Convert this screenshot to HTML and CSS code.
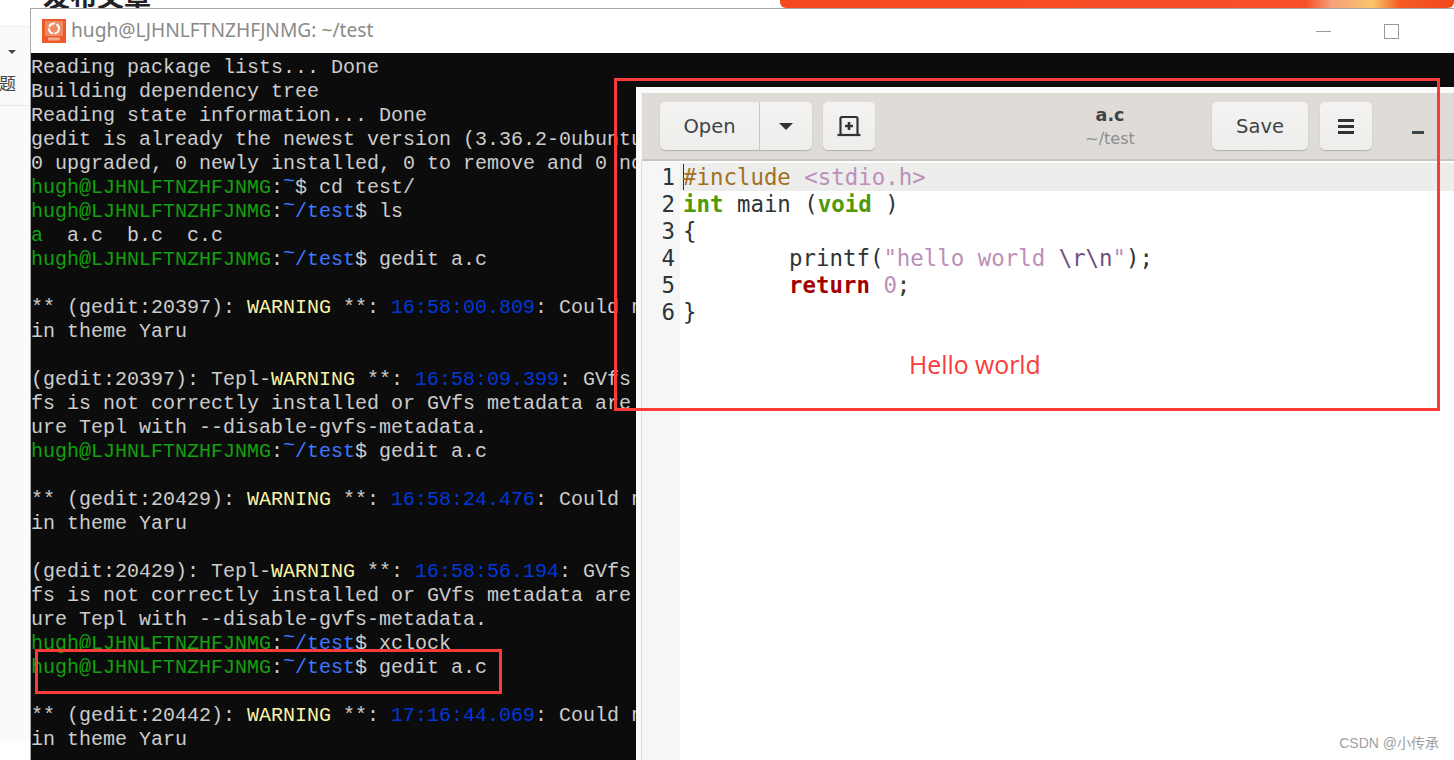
FILE: index.html
```html
<!DOCTYPE html>
<html>
<head>
    <meta charset="UTF-8">
    <title>gedit a.c</title>
    <link rel="stylesheet" href="styles.css">
</head>
<body>
    <!-- page behind the windows -->
    <div class="page-top">
        <div class="page-title">发布文章</div>
        <div class="banner"></div>
    </div>
    <div class="page-side">
        <div class="side-caret"></div>
        <div class="side-text">题</div>
    </div>

    <!-- terminal window -->
    <div class="terminal">
        <div class="titlebar">
            <svg class="app-icon" width="24" height="24" viewBox="0 0 24 24">
                <rect width="24" height="24" fill="#ee5b2b"/>
                <rect x="3" y="2" width="18" height="15" fill="#f08a63"/>
                <circle cx="12" cy="9.500" r="5" fill="none" stroke="#fff" stroke-width="2" stroke-dasharray="7 1.500"/>
                <rect x="6" y="18.500" width="12" height="3" fill="#f6a98c"/>
            </svg>
            <span class="title-text">hugh@LJHNLFTNZHFJNMG: ~/test</span>
            <div class="win-min"></div>
            <div class="win-max"></div>
        </div>
<pre class="console">Reading package lists... Done
Building dependency tree
Reading state information... Done
gedit is already the newest version (3.36.2-0ubuntu1).
0 upgraded, 0 newly installed, 0 to remove and 0 not upgraded.
<span class="g">hugh@LJHNLFTNZHFJNMG</span>:<span class="b tilde">~</span>$ cd test/
<span class="g">hugh@LJHNLFTNZHFJNMG</span>:<span class="b tilde">~</span><span class="b">/test</span>$ ls
<span class="g">a</span>  a.c  b.c  c.c
<span class="g">hugh@LJHNLFTNZHFJNMG</span>:<span class="b tilde">~</span><span class="b">/test</span>$ gedit a.c

** (gedit:20397): <span class="y">WARNING</span> **: <span class="t">16:58:00.809</span>: Could not
in theme Yaru

(gedit:20397): Tepl-<span class="y">WARNING</span> **: <span class="t">16:58:09.399</span>: GVfs
fs is not correctly installed or GVfs metadata are
ure Tepl with --disable-gvfs-metadata.
<span class="g">hugh@LJHNLFTNZHFJNMG</span>:<span class="b tilde">~</span><span class="b">/test</span>$ gedit a.c

** (gedit:20429): <span class="y">WARNING</span> **: <span class="t">16:58:24.476</span>: Could not
in theme Yaru

(gedit:20429): Tepl-<span class="y">WARNING</span> **: <span class="t">16:58:56.194</span>: GVfs
fs is not correctly installed or GVfs metadata are
ure Tepl with --disable-gvfs-metadata.
<span class="g">hugh@LJHNLFTNZHFJNMG</span>:<span class="b tilde">~</span><span class="b">/test</span>$ xclock
<span class="g">hugh@LJHNLFTNZHFJNMG</span>:<span class="b tilde">~</span><span class="b">/test</span>$ gedit a.c

** (gedit:20442): <span class="y">WARNING</span> **: <span class="t">17:16:44.069</span>: Could not
in theme Yaru</pre>
    </div>

    <!-- gedit window -->
    <div class="gedit">
        <div class="headerbar">
            <div class="btn-group">
                <div class="btn btn-open">Open</div>
                <div class="btn btn-arrow"><div class="arrow"></div></div>
            </div>
            <div class="btn btn-icon">
                <svg width="24" height="24" viewBox="0 0 24 24" fill="none" stroke="#2e3436" stroke-width="2.200">
                    <path d="M3.500 20V4.500Q3.500 3 5 3H19Q20.500 3 20.500 4.500V20"/>
                    <path d="M0.500 21H23.500"/>
                    <path d="M12 8V16M8 12H16" stroke-width="2.600"/>
                </svg>
            </div>
            <div class="doc-title">
                <div class="doc-name">a.c</div>
                <div class="doc-path">~/test</div>
            </div>
            <div class="btn btn-save">Save</div>
            <div class="btn btn-icon">
                <div class="burger"><i></i><i></i><i></i></div>
            </div>
            <div class="min-dash"></div>
        </div>
        <div class="editor">
            <div class="gutter">
                <div>1</div><div>2</div><div>3</div><div>4</div><div>5</div><div>6</div>
            </div>
            <div class="code">
<pre class="current"><span class="caret"></span><span class="pp">#include</span> <span class="str">&lt;stdio.h&gt;</span></pre>
<pre><span class="kw-type">int</span> main (<span class="kw-type">void</span> )</pre>
<pre>{</pre>
<pre><span class="indent"></span>printf(<span class="str">"hello world </span><span class="esc">\r\n</span><span class="str">"</span>);</pre>
<pre><span class="indent"></span><span class="kw-ret">return</span> <span class="str">0</span>;</pre>
<pre>}</pre>
            </div>
        </div>
    </div>

    <!-- annotations on top of the screenshot -->
    <div class="mark mark-gedit"></div>
    <div class="mark mark-cmd"></div>
    <div class="note">Hello world</div>
    <div class="watermark">CSDN @小传承</div>
</body>
</html>
```

FILE: styles.css
```css
html, body {
    margin: 0;
    padding: 0;
}
body {
    position: relative;
    width: 1454px;
    height: 760px;
    overflow: hidden;
    background-color: #fff;
    font-family: "Noto Sans", "Noto Sans CJK SC", sans-serif;
}
pre {
    margin: 0;
    font: inherit;
}

/* page behind */
.page-top {
    display: flex;
    height: 26px;
    overflow: hidden;
    background-color: #fff;
}
.page-title {
    margin: -24px 0 0 43px;
    font-family: "Noto Sans CJK SC", sans-serif;
    font-size: 27px;
    font-weight: 700;
    line-height: 40px;
    color: #222;
}
.banner {
    width: 674px;
    height: 8px;
    margin-left: auto;
    background: linear-gradient(90deg, #f6481f, #f8502a 78%, #f6a27a 82%, #f9c46a 88%, #f55a24 92%, #f0481c);
    border-radius: 0 0 6px 6px;
}
.page-side {
    width: 30px;
    height: 714px;
    background-color: #fafafa;
    border-top: 1px solid #eee;
}
.side-caret {
    width: 0;
    height: 0;
    margin: 23px 0 0 8px;
    border-left: 4px solid transparent;
    border-right: 4px solid transparent;
    border-top: 4px solid #444;
}
.side-text {
    width: 30px;
    height: 34px;
    margin-top: 18px;
    box-sizing: border-box;
    font-size: 17px;
    line-height: 24px;
    color: #444;
    text-indent: -1px;
    border-bottom: 1px solid #e8e8e8;
}

/* terminal */
.terminal {
    position: absolute;
    left: 30px;
    top: 8px;
    width: 1424px;
    height: 752px;
    overflow: hidden;
    box-sizing: border-box;
    border: 1px solid #a8a8a8;
    border-right: none;
    border-bottom: none;
    background-color: #0c0c0c;
}
.titlebar {
    display: flex;
    align-items: center;
    height: 44px;
    padding-left: 11px;
    background-color: #fff;
}
.title-text {
    margin-left: 5px;
    font-family: "Noto Sans", sans-serif;
    font-size: 19.200px;
    line-height: 42px;
    align-self: flex-start;
    color: #8a8a8a;
}
.win-min {
    width: 15px;
    height: 1px;
    margin-left: auto;
    background-color: #999;
}
.win-max {
    width: 13px;
    height: 13px;
    margin: 0 55px 0 53px;
    border: 1px solid #999;
}
.console {
    padding-top: 3px;
    font-family: "Liberation Mono", monospace;
    font-size: 20px;
    line-height: 24px;
    color: #cccccc;
    white-space: pre;
}
.g { color: #13a10e; }
.b { color: #3b78ff; }
.y { color: #f9f1a5; }
.t { color: #0037da; }
.tilde {
    line-height: 0;
    vertical-align: 6px;
}

/* gedit */
.gedit {
    position: absolute;
    left: 636px;
    top: 87px;
    width: 818px;
    height: 673px;
    box-sizing: border-box;
    padding: 6px 0 0 6px;
    background-color: #fafafa;
}
.headerbar {
    display: flex;
    align-items: center;
    height: 68px;
    padding: 0 0 0 18px;
    box-sizing: border-box;
    border-bottom: 2px solid #c9c4be;
    background-color: #dfdbd7;
}
.btn {
    display: flex;
    align-items: center;
    justify-content: center;
    height: 48px;
    box-sizing: border-box;
    border-radius: 5px;
    background: linear-gradient(#f4f3f2, #ededeb);
    box-shadow: 0 1px 1px rgba(120, 110, 100, 0.4);
    font-family: "DejaVu Sans", sans-serif;
    font-size: 19.500px;
    color: #3d4447;
}
.btn-group {
    display: flex;
    margin-right: 11px;
}
.btn-open {
    width: 100px;
    border-radius: 5px 0 0 5px;
    border-right: 1px solid #cfcac5;
}
.btn-arrow {
    width: 52px;
    border-radius: 0 5px 5px 0;
}
.arrow {
    width: 0;
    height: 0;
    border-left: 7px solid transparent;
    border-right: 7px solid transparent;
    border-top: 7px solid #2e3436;
}
.btn-icon {
    width: 52px;
}
.doc-title {
    width: 204px;
    margin-left: 133px;
    padding-top: 2px;
    text-align: center;
    font-family: "DejaVu Sans", sans-serif;
}
.doc-name {
    font-size: 17.500px;
    font-weight: 700;
    line-height: 23px;
    color: #3d4447;
}
.doc-path {
    font-size: 16px;
    line-height: 23px;
    color: #8b8e8f;
}
.btn-save {
    width: 96px;
    margin-right: 12px;
}
.burger i {
    display: block;
    width: 16px;
    height: 3px;
    margin: 3px 0;
    background-color: #2e3436;
}
.min-dash {
    width: 12px;
    height: 3px;
    margin: 12px 0 0 40px;
    background-color: #3d4447;
}
.editor {
    display: flex;
    height: 599px;
    border-left: 1px solid #dddddd;
    margin-left: -1px;
    background-color: #fff;
    font-family: "DejaVu Sans Mono", monospace;
    font-size: 22.400px;
    line-height: 27px;
    color: #2e3436;
}
.gutter {
    position: relative;
    width: 38px;
    box-sizing: border-box;
    padding: 3px 5px 0 0;
    background-color: #f6f6f6;
    text-align: right;
}
.code {
    flex: 1;
    padding-top: 3px;
}
.code pre {
    padding-left: 3px;
}
.code .current {
    margin: -1px 0 0 -38px;
    padding: 1px 0 0 41px;
    background-color: #ededec;
}
.caret {
    display: inline-block;
    width: 1px;
    height: 26px;
    margin-right: -1px;
    vertical-align: top;
    background-color: #2e3436;
}
.indent {
    display: inline-block;
    width: 106px;
}
.pp { color: #a2701f; }
.str { color: #bc8fba; }
.esc { color: #6d4f80; }
.kw-type { color: #4e9a06; font-weight: 700; }
.kw-ret { color: #a40000; font-weight: 700; }

/* annotations */
.mark {
    position: absolute;
    box-sizing: border-box;
    border: 3px solid #fb3a3a;
}
.mark-gedit {
    left: 614px;
    top: 78px;
    width: 826px;
    height: 333px;
}
.mark-cmd {
    left: 35px;
    top: 649px;
    width: 467px;
    height: 45px;
}
.note {
    position: absolute;
    left: 909px;
    top: 348px;
    font-family: "Open Sans", "Noto Sans", sans-serif;
    font-size: 24.800px;
    line-height: 32px;
    color: #fb3a3a;
}
.watermark {
    position: absolute;
    right: 15px;
    top: 733px;
    font-family: "Liberation Sans", "Noto Sans CJK SC", sans-serif;
    font-size: 14px;
    line-height: 20px;
    color: #a0a0a0;
}
```
